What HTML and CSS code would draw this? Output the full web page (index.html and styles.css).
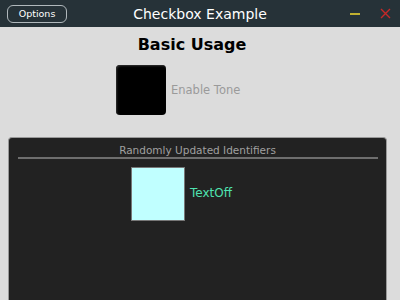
FILE: index.html
```html
<!DOCTYPE html>
<html lang="en">
<head>
  <meta charset="UTF-8">
  <title>Checkbox Example</title>
  <link rel="stylesheet" href="styles.css">
</head>
<body>
  <div class="titlebar">
    <button class="options">Options</button>
    <div class="title">Checkbox Example</div>
    <div class="controls">
      <span class="min"></span>
      <svg class="close" width="11" height="11" viewBox="0 0 11 11">
        <path d="M1 1 L10 10 M10 1 L1 10" stroke="#c62828" stroke-width="1.4"/>
      </svg>
    </div>
  </div>

  <h1>Basic Usage</h1>

  <div class="row">
    <div class="check"></div>
    <span class="label">Enable Tone</span>
  </div>

  <div class="panel">
    <div class="panel-title">Randomly Updated Identifiers</div>
    <div class="sep"></div>
    <div class="row ids">
      <div class="check light"></div>
      <span class="label green">TextOff</span>
    </div>
  </div>
</body>
</html>
```

FILE: styles.css
```css
body {
  margin: 0;
  background: #dcdcdc;
  font-family: 'DejaVu Sans', sans-serif;
  height: 300px;
  overflow: hidden;
}
.titlebar {
  height: 27px;
  background: #263238;
  display: flex;
  align-items: center;
}
.options {
  margin-left: 7px;
  width: 60px;
  height: 18px;
  background: transparent;
  border: 1px solid #b0b8bc;
  border-radius: 6px;
  color: #fff;
  font-family: 'DejaVu Sans', sans-serif;
  font-size: 9.5px;
  padding: 0;
}
.title {
  flex: 1;
  text-align: center;
  color: #fff;
  font-size: 14px;
  margin-left: -67px;
  margin-right: -50px;
}
.controls {
  display: flex;
  align-items: center;
  gap: 20px;
  margin-right: 9px;
}
.min {
  width: 10px;
  height: 2px;
  background: #c0b030;
}
.close {
  display: block;
}
h1 {
  margin: 8px 0 0;
  padding-right: 16px;
  text-align: center;
  font-size: 16px;
  font-weight: bold;
  color: #000;
  line-height: 20px;
}
.row {
  display: flex;
  align-items: center;
  margin-top: 10px;
  padding-left: 116px;
}
.check {
  width: 50px;
  height: 50px;
  background: #000;
  border-radius: 4px;
  box-shadow: inset 1px 1px 2px #333;
}
.label {
  margin-left: 5px;
  font-size: 11.5px;
  color: #9a9a9a;
}
.panel {
  box-sizing: border-box;
  margin: 22px 13px 0 8px;
  height: 163px;
  background: #222;
  border: 1px solid #999;
  border-bottom: none;
  border-radius: 4px 4px 0 0;
  padding-top: 6px;
}
.panel-title {
  text-align: center;
  font-size: 10.5px;
  color: #a0a0a0;
  line-height: 13px;
}
.sep {
  height: 2px;
  background: #6e6e6e;
  margin: 0 8px 0 9px;
}
.ids {
  margin-top: 8px;
  padding-left: 122px;
}
.check.light {
  width: 52px;
  height: 52px;
  background: #c0ffff;
  border: 1px solid #777;
  border-radius: 0;
  box-shadow: none;
}
.green {
  color: #4fe3b0;
  font-size: 12px;
  margin-bottom: 3px;
}
```
